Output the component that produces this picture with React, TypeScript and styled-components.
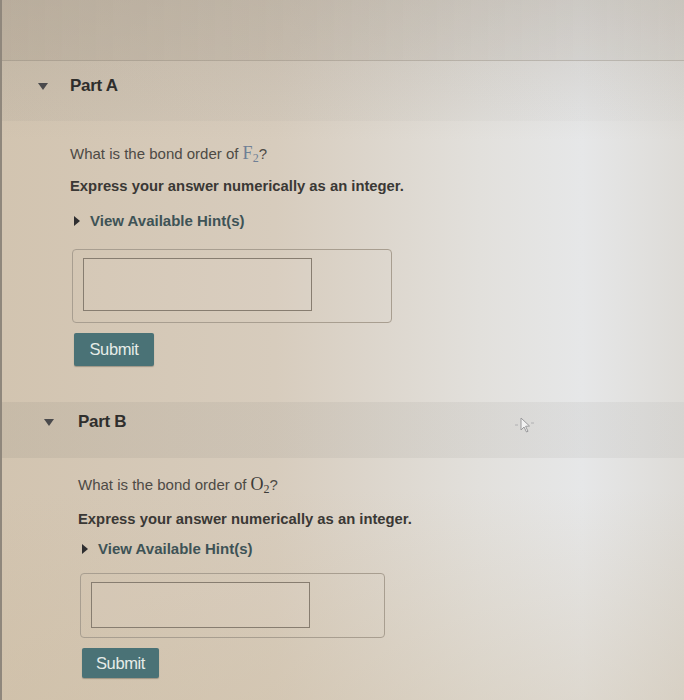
import React from 'react';
import styled, { createGlobalStyle } from 'styled-components';

const GlobalStyle = createGlobalStyle`
  html, body {
    margin: 0;
    padding: 0;
  }
  body {
    font-family: "Liberation Sans", Arial, Helvetica, sans-serif;
    color: #3b3935;
  }
`;

const Page = styled.div`
  position: relative;
  width: 684px;
  height: 700px;
  overflow: hidden;
  border-left: 2px solid #8f877c;
  box-sizing: border-box;
  background:
    linear-gradient(180deg, rgba(176, 166, 152, 0.35) 0%, rgba(176, 166, 152, 0) 20%, rgba(0, 0, 0, 0) 70%, rgba(205, 188, 160, 0.35) 100%),
    linear-gradient(90deg, #d2c4b0 0%, #d7ccbd 40%, #e2e0dc 70%, #e6e7e8 85%, #dddbd7 100%);
`;

const TopStrip = styled.div`
  height: 60px;
  border-bottom: 1px solid rgba(140, 132, 120, 0.35);
  background: linear-gradient(90deg, rgba(150, 140, 126, 0.28), rgba(170, 165, 158, 0.12));
`;

const Spacer = styled.div<{ $h: number }>`
  height: ${(p) => p.$h}px;
`;

const PartHeader = styled.div<{ $indent: number; $height: number; $pad: number; $dark?: boolean }>`
  height: ${(p) => p.$height}px;
  display: flex;
  align-items: flex-start;
  padding-top: ${(p) => p.$pad}px;
  padding-left: ${(p) => p.$indent}px;
  box-sizing: border-box;
  background: ${(p) =>
    p.$dark
      ? 'linear-gradient(90deg, rgba(150, 144, 132, 0.18), rgba(170, 170, 168, 0.14))'
      : 'linear-gradient(90deg, rgba(160, 154, 144, 0.14), rgba(190, 192, 194, 0.06))'};
`;

const Caret = styled.span<{ $gap: number }>`
  display: inline-block;
  width: 0;
  height: 0;
  margin-top: 7px;
  margin-right: ${(p) => p.$gap}px;
  border-left: 5px solid transparent;
  border-right: 5px solid transparent;
  border-top: 7px solid #4a4a4c;
`;

const PartTitle = styled.span`
  font-size: 17px;
  font-weight: 700;
  color: #2f2e2c;
  letter-spacing: -0.3px;
  line-height: 20px;
`;

const PartBody = styled.div<{ $indent: number; $top: number }>`
  padding-left: ${(p) => p.$indent}px;
  padding-top: ${(p) => p.$top}px;
  display: flex;
  flex-direction: column;
  align-items: flex-start;
`;

const Question = styled.p`
  margin: 0;
  font-size: 15px;
  line-height: 20px;
  color: #4d4a45;
`;

const Formula = styled.span<{ $tint?: boolean }>`
  font-family: "Liberation Serif", "Times New Roman", serif;
  font-size: 18px;
  color: ${(p) => (p.$tint ? '#6f7f95' : '#3d3b38')};
  sub {
    font-size: 12px;
    vertical-align: -3px;
  }
`;

const Instruction = styled.p<{ $gap: number }>`
  margin: ${(p) => p.$gap}px 0 0;
  font-size: 14.8px;
  line-height: 20px;
  font-weight: 700;
  color: #3a3835;
`;

const HintToggle = styled.div<{ $gap: number }>`
  margin-top: ${(p) => p.$gap}px;
  margin-left: 4px;
  display: flex;
  align-items: center;
  gap: 10px;
  font-size: 15px;
  line-height: 20px;
  font-weight: 700;
  color: #3e5356;
`;

const HintArrow = styled.span`
  width: 0;
  height: 0;
  border-top: 5px solid transparent;
  border-bottom: 5px solid transparent;
  border-left: 6px solid #2e2e30;
`;

const AnswerFrame = styled.div<{ $w: number; $h: number; $gap: number }>`
  margin-top: ${(p) => p.$gap}px;
  margin-left: 2px;
  width: ${(p) => p.$w}px;
  height: ${(p) => p.$h}px;
  box-sizing: border-box;
  border: 1px solid #a89e90;
  border-radius: 4px;
  padding: 8px 10px;
`;

const AnswerInput = styled.input<{ $w: number; $h: number }>`
  display: block;
  width: ${(p) => p.$w}px;
  height: ${(p) => p.$h}px;
  box-sizing: border-box;
  border: 1.5px solid #877d70;
  background: rgba(255, 255, 255, 0.05);
  outline: none;
  padding: 0 6px;
  font-size: 14px;
`;

const SubmitButton = styled.button<{ $w: number; $h: number; $gap: number }>`
  margin-top: ${(p) => p.$gap}px;
  margin-left: 4px;
  width: ${(p) => p.$w}px;
  height: ${(p) => p.$h}px;
  border: none;
  border-radius: 2px;
  background: #4a7276;
  color: #e6ece8;
  font-family: "Liberation Sans", Arial, sans-serif;
  font-size: 16.5px;
  letter-spacing: -0.4px;
  cursor: pointer;
  box-shadow: 0 1px 1px rgba(60, 60, 50, 0.35);
`;

const Pointer = styled.div`
  position: absolute;
  left: 511px;
  top: 415px;
  width: 22px;
  height: 20px;
`;

interface PartMetrics {
  caretIndent: number;
  titleGap: number;
  headerHeight: number;
  headerPad: number;
  dark?: boolean;
  bodyIndent: number;
  bodyTop: number;
  lineGap: number;
  hintGap: number;
  frameGap: number;
  frame: [number, number];
  input: [number, number];
  buttonGap: number;
  button: [number, number];
}

interface PartProps {
  name: string;
  formula: string;
  sub: string;
  tint?: boolean;
  instruction: string;
  m: PartMetrics;
}

function Part({ name, formula, sub, tint, instruction, m }: PartProps) {
  return (
    <section>
      <PartHeader $indent={m.caretIndent} $height={m.headerHeight} $pad={m.headerPad} $dark={m.dark}>
        <Caret $gap={m.titleGap} />
        <PartTitle>{name}</PartTitle>
      </PartHeader>
      <PartBody $indent={m.bodyIndent} $top={m.bodyTop}>
        <Question>
          What is the bond order of{' '}
          <Formula $tint={tint}>
            {formula}
            <sub>{sub}</sub>
          </Formula>
          ?
        </Question>
        <Instruction $gap={m.lineGap}>{instruction}</Instruction>
        <HintToggle $gap={m.hintGap}>
          <HintArrow />
          View Available Hint(s)
        </HintToggle>
        <AnswerFrame $w={m.frame[0]} $h={m.frame[1]} $gap={m.frameGap}>
          <AnswerInput type="text" $w={m.input[0]} $h={m.input[1]} />
        </AnswerFrame>
        <SubmitButton $w={m.button[0]} $h={m.button[1]} $gap={m.buttonGap}>
          Submit
        </SubmitButton>
      </PartBody>
    </section>
  );
}

const partA: PartMetrics = {
  caretIndent: 36,
  titleGap: 22,
  headerHeight: 60,
  headerPad: 15,
  bodyIndent: 68,
  bodyTop: 22,
  lineGap: 8,
  hintGap: 15,
  frameGap: 18,
  frame: [320, 74],
  input: [229, 53],
  buttonGap: 10,
  button: [80, 33],
};

const partB: PartMetrics = {
  caretIndent: 42,
  titleGap: 24,
  headerHeight: 56,
  headerPad: 10,
  dark: true,
  bodyIndent: 76,
  bodyTop: 16,
  lineGap: 10,
  hintGap: 10,
  frameGap: 14,
  frame: [305, 65],
  input: [219, 46],
  buttonGap: 10,
  button: [77, 30],
};

export default function App() {
  return (
    <>
      <GlobalStyle />
      <Page>
        <TopStrip />
        <Part
          name="Part A"
          formula="F"
          sub="2"
          tint
          instruction="Express your answer numerically as an integer."
          m={partA}
        />
        <Spacer $h={36} />
        <Part
          name="Part B"
          formula="O"
          sub="2"
          instruction="Express your answer numerically as an integer."
          m={partB}
        />
        <Pointer>
          <svg width="22" height="20" viewBox="0 0 22 20">
            <path d="M8 3 L8 15 L11 12 L13.5 17 L15 16.3 L12.6 11.3 L16.5 11 Z" fill="#f2f2f2" stroke="#9a9a9c" strokeWidth="1" strokeLinejoin="round" />
            <path d="M2 10 H5 M18 8 H21" stroke="#b0b0b2" strokeWidth="1" />
          </svg>
        </Pointer>
      </Page>
    </>
  );
}
